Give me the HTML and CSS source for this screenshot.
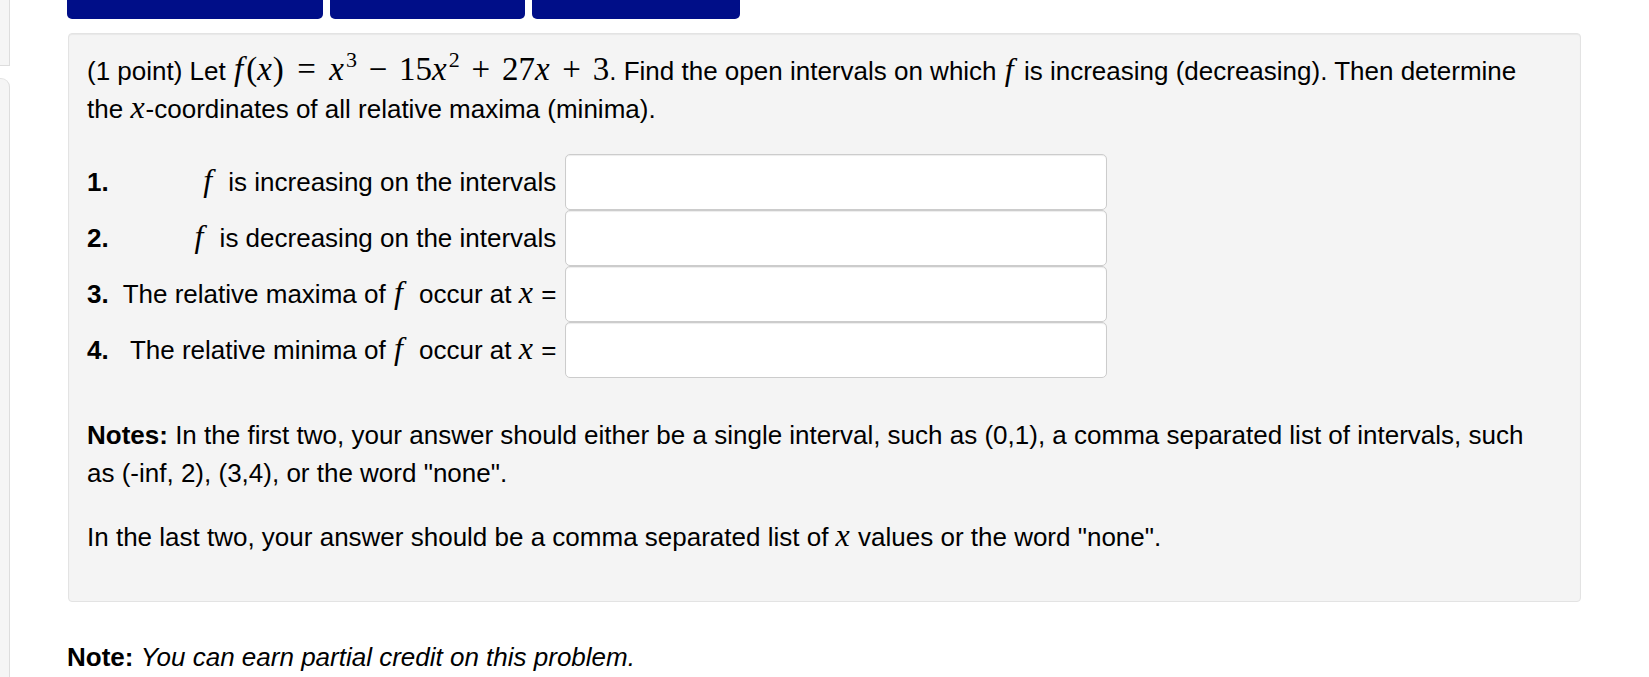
FILE: index.html
```html
<!DOCTYPE html>
<html>
<head>
<meta charset="utf-8">
<link rel="stylesheet" href="styles.css">
</head>
<body>
<div class="page">
  <aside class="sidebar">
    <div class="side-top"></div>
    <div class="side-nav"></div>
  </aside>
  <main class="main">
    <div class="btn-row">
      <div class="btn btn-a"></div>
      <div class="btn btn-b"></div>
      <div class="btn btn-c"></div>
    </div>
    <div class="well">
      <p class="intro">(1 point) Let <span class="m big"><i class="fv">f</i>(<i>x</i>)<span class="rel">=</span><i>x</i><sup>3</sup><span class="op">−</span>15<i>x</i><sup>2</sup><span class="op">+</span>27<i>x</i><span class="op">+</span>3</span>. Find the open intervals on which <span class="m"><i class="fv">f</i></span> is increasing (decreasing). Then determine the <span class="m"><i>x</i></span>-coordinates of all relative maxima (minima).</p>

      <div class="answers">
        <div class="num">1.</div>
        <div class="label"><span class="m"><i class="fv">f</i></span> is increasing on the intervals</div>
        <div class="field"><input class="ans" type="text"></div>

        <div class="num">2.</div>
        <div class="label"><span class="m"><i class="fv">f</i></span> is decreasing on the intervals</div>
        <div class="field"><input class="ans" type="text"></div>

        <div class="num">3.</div>
        <div class="label">The relative maxima of <span class="m"><i class="fv">f</i></span> occur at <span class="m"><i>x</i></span> =</div>
        <div class="field"><input class="ans" type="text"></div>

        <div class="num">4.</div>
        <div class="label">The relative minima of <span class="m"><i class="fv">f</i></span> occur at <span class="m"><i>x</i></span> =</div>
        <div class="field"><input class="ans" type="text"></div>
      </div>

      <p class="notes"><b>Notes:</b> In the first two, your answer should either be a single interval, such as (0,1), a comma separated list of intervals, such as (-inf, 2), (3,4), or the word "none".</p>
      <p class="notes2">In the last two, your answer should be a comma separated list of <span class="m"><i>x</i></span> values or the word "none".</p>
    </div>
    <p class="credit"><b>Note:</b> <i>You can earn partial credit on this problem.</i></p>
  </main>
</div>
</body>
</html>
```
FILE: styles.css
```css
html, body {
  margin: 0;
  padding: 0;
  background: #fff;
}
body {
  font-family: "Liberation Sans", Arial, sans-serif;
  font-size: 26px;
  line-height: 38px;
  color: #000;
  overflow: hidden;
}
.page {
  display: flex;
  align-items: stretch;
  min-height: 677px;
}
.sidebar {
  width: 10px;
  display: flex;
  flex-direction: column;
  flex: none;
}
.side-top {
  height: 65px;
  background: #f5f5f5;
  border-right: 1px solid #dddddd;
  border-bottom: 1px solid #dddddd;
}
.side-nav {
  margin-top: 12px;
  flex: 1;
  background: #f5f5f5;
  border-top: 1px solid #e3e3e3;
  border-right: 1px solid #dddddd;
  border-top-right-radius: 9px;
}
.main {
  flex: none;
  width: 1514px;
  margin-left: 57px;
}
.btn-row {
  display: flex;
  gap: 7px;
  height: 19px;
}
.btn {
  height: 19px;
  background: #000e88;
  border-bottom-left-radius: 5px;
  border-bottom-right-radius: 5px;
}
.btn-a { width: 256px; }
.btn-b { width: 195px; }
.btn-c { width: 208px; }

.well {
  margin-top: 14px;
  margin-left: 1px;
  background: #f4f4f4;
  border: 1px solid #e3e3e3;
  border-radius: 4px;
  box-shadow: inset 0 1px 1px rgba(0,0,0,0.05);
  padding: 18px 24px 19px 18px;
}
.well p { margin: 0; }
.intro { margin-bottom: 26px !important; }

.m {
  font-family: "Liberation Serif", "Times New Roman", serif;
  font-size: 32px;
  line-height: 1;
  white-space: nowrap;
}
.m.big { font-size: 33px; }
.m i { font-style: italic; letter-spacing: 1px; }
.m i.fv { margin-right: 2px; margin-left: 1px; }
.m sup {
  font-size: 22px;
  line-height: 0;
  vertical-align: 0;
  position: relative;
  top: -13px;
  margin-left: 1px;
}
.op {
  display: inline-block;
  width: 0.778em;
  text-align: center;
  margin: 0 0.25em;
}
.rel {
  display: inline-block;
  width: 0.778em;
  text-align: center;
  margin: 0 0.3em;
}

.answers {
  display: grid;
  grid-template-columns: auto auto 542px;
  grid-auto-rows: 56px;
  align-items: center;
  justify-content: start;
  margin-bottom: 38px;
}
.num {
  font-weight: bold;
  padding-right: 14px;
}
.label {
  text-align: right;
  padding-right: 9px;
  white-space: nowrap;
}
.label .m i.fv { margin-right: 8px; }
.field { height: 56px; }
.ans {
  box-sizing: border-box;
  width: 542px;
  height: 56px;
  margin: 0;
  border: 1px solid #cccccc;
  border-radius: 5px;
  background: #fff;
  box-shadow: inset 0 1px 1px rgba(0,0,0,0.075);
  font: inherit;
  padding: 0 12px;
  display: block;
}
.notes { margin-bottom: 26px !important; }
.notes2 { margin-bottom: 26px !important; }

.credit {
  margin: 36px 0 0 0;
}
.credit i { font-style: italic; }
```
